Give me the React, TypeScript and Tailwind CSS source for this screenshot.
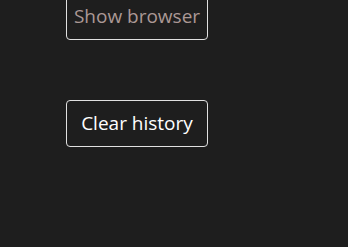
export default function App() {
  return (
    <div className="min-h-[247px] w-[348px] bg-[#1e1e1e] overflow-hidden" style={{ fontFamily: '"Open Sans", "Noto Sans", sans-serif' }}>
      <div className="flex flex-col items-start gap-[60px] pl-[66px] -mt-[7px]">
        <button className="h-[47px] w-[142px] rounded-[4px] border border-[#e0e0e0] text-[19px] text-[#ab9895]">
          Show browser
        </button>
        <button className="h-[47px] w-[142px] rounded-[4px] border border-[#e0e0e0] text-[19px] text-white">
          Clear history
        </button>
      </div>
    </div>
  );
}
